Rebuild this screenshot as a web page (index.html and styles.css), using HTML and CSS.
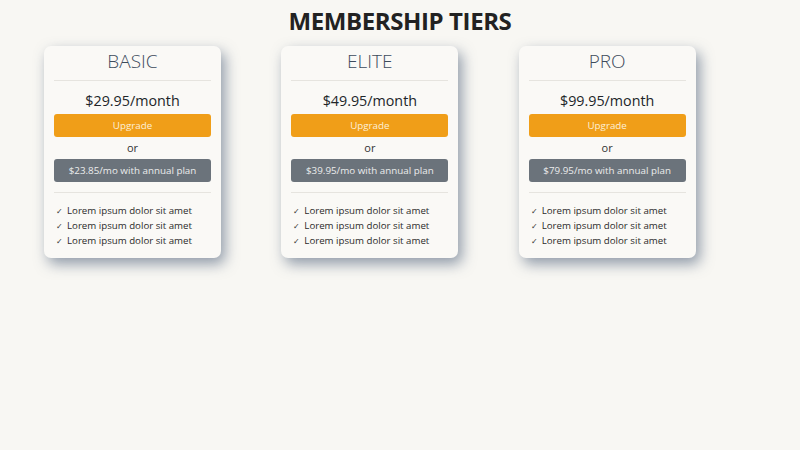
FILE: index.html
```html
<!DOCTYPE html>
<html>
<head>
<meta charset="utf-8">
<link rel="stylesheet" href="styles.css">
</head>
<body>
<h1 class="title">MEMBERSHIP TIERS</h1>
<div class="tiers">
  <div class="col">
    <div class="card">
      <h2 class="name">BASIC</h2>
      <hr class="rule">
      <div class="price">$29.95/month</div>
      <button class="btn upgrade">Upgrade</button>
      <div class="or">or</div>
      <button class="btn annual">$23.85/mo with annual plan</button>
      <hr class="rule">
      <ul class="features">
        <li><span class="check">✓</span>Lorem ipsum dolor sit amet</li>
        <li><span class="check">✓</span>Lorem ipsum dolor sit amet</li>
        <li><span class="check">✓</span>Lorem ipsum dolor sit amet</li>
      </ul>
    </div>
  </div>
  <div class="col">
    <div class="card">
      <h2 class="name">ELITE</h2>
      <hr class="rule">
      <div class="price">$49.95/month</div>
      <button class="btn upgrade">Upgrade</button>
      <div class="or">or</div>
      <button class="btn annual">$39.95/mo with annual plan</button>
      <hr class="rule">
      <ul class="features">
        <li><span class="check">✓</span>Lorem ipsum dolor sit amet</li>
        <li><span class="check">✓</span>Lorem ipsum dolor sit amet</li>
        <li><span class="check">✓</span>Lorem ipsum dolor sit amet</li>
      </ul>
    </div>
  </div>
  <div class="col">
    <div class="card">
      <h2 class="name">PRO</h2>
      <hr class="rule">
      <div class="price">$99.95/month</div>
      <button class="btn upgrade">Upgrade</button>
      <div class="or">or</div>
      <button class="btn annual">$79.95/mo with annual plan</button>
      <hr class="rule">
      <ul class="features">
        <li><span class="check">✓</span>Lorem ipsum dolor sit amet</li>
        <li><span class="check">✓</span>Lorem ipsum dolor sit amet</li>
        <li><span class="check">✓</span>Lorem ipsum dolor sit amet</li>
      </ul>
    </div>
  </div>
</div>
</body>
</html>
```

FILE: styles.css
```css
html, body {
  margin: 0;
  padding: 0;
  background: #f8f7f3;
  font-family: "Open Sans", "Noto Sans", sans-serif;
  color: #212529;
}
body {
  min-height: 100vh;
}
.title {
  margin: 0;
  padding-top: 6px;
  text-align: center;
  font-family: "Open Sans", sans-serif;
  font-weight: 700;
  font-size: 24px;
  line-height: 30px;
  color: #222;
  letter-spacing: -0.4px;
}
.tiers {
  display: grid;
  grid-template-columns: repeat(3, 1fr);
  padding: 10px 44px 30px 44px;
}
.col {
  display: flex;
}
.card {
  width: 177px;
  box-sizing: border-box;
  background: #faf9f6;
  border-radius: 7px;
  padding: 2px 10px 10px 10px;
  box-shadow: 4px 6px 14px rgba(60, 80, 110, 0.55);
  display: flex;
  flex-direction: column;
  align-items: stretch;
}
.name {
  margin: 0;
  text-align: center;
  font-weight: 300;
  font-size: 19px;
  line-height: 26px;
  color: #3d4b5c;
}
.rule {
  border: 0;
  border-top: 1px solid #e6e4df;
  margin: 6px 0 0 0;
  width: 100%;
}
.price {
  text-align: center;
  font-size: 14.3px;
  line-height: 20px;
  margin-top: 10px;
  color: #212529;
}
.btn {
  border: 0;
  border-radius: 3px;
  height: 23px;
  font-family: "Open Sans", sans-serif;
  font-size: 9.8px;
  padding: 0;
}
.upgrade {
  background: #f09e18;
  color: #fdf0d8;
  margin-top: 3px;
}
.or {
  text-align: center;
  font-size: 11px;
  line-height: 22px;
  color: #333;
}
.annual {
  background: #6b737b;
  color: #eceded;
}
.annual + .rule {
  margin-top: 10px;
}
.features {
  list-style: none;
  margin: 10px 0 0 0;
  padding: 0 0 0 2px;
  font-size: 9.7px;
  line-height: 15px;
  color: #2a2a2a;
}
.check {
  display: inline-block;
  width: 11px;
  font-size: 8px;
  color: #333;
}
```
